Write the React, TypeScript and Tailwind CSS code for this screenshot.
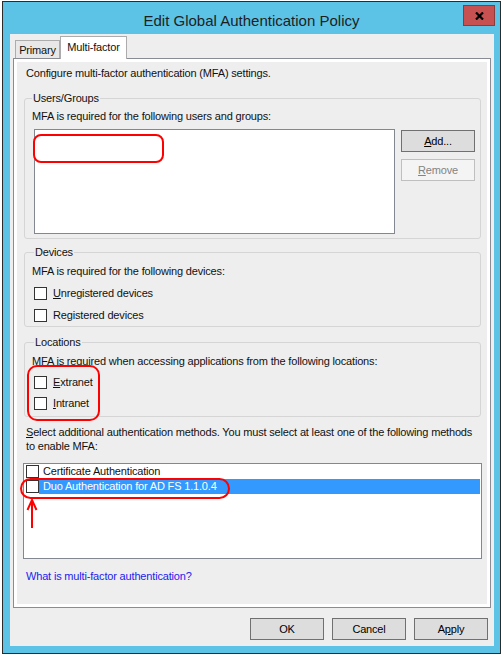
import React from "react"

const font = "font-['Segoe_UI','Liberation_Sans',Arial,sans-serif]"

const Box = () => <span className="block w-[13px] h-[13px] shrink-0 border border-[#333] bg-white" />

const Check = ({ pre, u, post }: { pre?: string; u: string; post: string }) => (
  <div className="flex items-center gap-[6px] h-[22px]">
    <Box />
    <span>
      {pre}
      <span className="underline">{u}</span>
      {post}
    </span>
  </div>
)

const Group = ({ title, className, children }: { title: string; className?: string; children: React.ReactNode }) => (
  <fieldset className={"ml-[7px] w-[457px] border border-[#d5d5d5] rounded-[3px] pl-[7px] " + (className || "")}>
    <legend className="px-[1px] leading-[15px]">{title}</legend>
    {children}
  </fieldset>
)

const Btn = ({ children, disabled }: { children: React.ReactNode; disabled?: boolean }) => (
  <button
    className={
      "w-[74px] h-[22px] flex items-center justify-center border " +
      (disabled ? "border-[#bfbfbf] bg-[#f4f4f4] text-[#838383]" : "border-[#707070] bg-[#dddddd] text-black")
    }
  >
    {children}
  </button>
)

export default function App() {
  return (
    <div className={"relative w-[502px] h-[657px] bg-white text-[11px] tracking-[-0.17px] leading-[15px] text-[#111] " + font}>
      <div className="ml-[2px] mt-[1px] w-[499px] h-[653px] border border-[#2b2b2b] bg-[#5cc3e6] flex flex-col">
        {/* title bar */}
        <div className="relative h-[32px] shrink-0 flex items-center justify-center pt-[4px] text-[15px] tracking-normal text-[#1e1e1e]">
          Edit Global Authentication Policy
          <div className="absolute right-[5px] top-[3px] w-[32px] h-[21px] bg-[#c75050] border border-[#8a3c3c] flex items-center justify-center">
            <svg width="9" height="8" viewBox="0 0 9 8">
              <path d="M1 0.5 L8 7.5 M8 0.5 L1 7.5" stroke="#000" strokeWidth="2.2" />
            </svg>
          </div>
        </div>

        {/* client area */}
        <div className="ml-[7px] w-[484px] h-[612px] bg-[#eeeeee] flex flex-col">
          {/* tabs */}
          <div className="h-[24px] flex items-end pl-[5px]">
            <div className="h-[18px] w-[45px] border border-b-0 border-[#acacac] bg-[#e8e8e8] flex items-center justify-center pt-[1px]">
              Primary
            </div>
            <div className="relative z-10 h-[23px] -mb-px w-[67px] border border-b-0 border-[#acacac] bg-white flex items-start justify-center pt-[3px]">
              Multi-factor
            </div>
          </div>

          {/* tab page */}
          <div className="ml-[3px] w-[478px] h-[550px] border border-[#898c95] bg-white p-[3px]">
            <div className="h-full bg-[#eeeeee] flex flex-col">
              <div className="pt-[4px] pl-[9px]">Configure multi-factor authentication (MFA) settings.</div>

              <Group title="Users/Groups" className="mt-[10px] pb-[4px]">
                <div className="mt-[3px]">MFA is required for the following users and groups:</div>
                <div className="mt-[5px] flex gap-[6px]">
                  <div className="ml-[2px] w-[361px] h-[105px] border border-[#828790] bg-white" />
                  <div className="pt-[1px] flex flex-col gap-[7px]">
                    <Btn>
                      <span className="underline">A</span>dd...
                    </Btn>
                    <Btn disabled>
                      <span className="underline">R</span>emove
                    </Btn>
                  </div>
                </div>
              </Group>

              <Group title="Devices" className="mt-[6px] pl-[9px]">
                <div className="mt-[4px] -ml-[2px]">MFA is required for the following devices:</div>
                <div className="mt-[3px]">
                  <Check u="U" post="nregistered devices" />
                  <Check pre="Re" u="g" post="istered devices" />
                </div>
              </Group>

              <Group title="Locations" className="mt-[8px] pl-[9px] pb-[2px]">
                <div className="mt-[4px] -ml-[2px]">
                  MFA is required when accessing applications from the following locations:
                </div>
                <div className="mt-[3px] [&>div]:h-[21px]">
                  <Check u="E" post="xtranet" />
                  <Check u="I" post="ntranet" />
                </div>
              </Group>

              <div className="mt-[8px] pl-[9px] leading-[14px]">
                <span className="underline">S</span>elect additional authentication methods. You must select at least one of the
                following methods
                <br />
                to enable MFA:
              </div>

              <div className="mt-[10px] ml-[6px] w-[459px] h-[96px] border border-[#828790] bg-white">
                <div className="h-[15px] flex items-center pl-[2px]">
                  <Box />
                  <span className="pl-[4px]">Certificate Authentication</span>
                </div>
                <div className="h-[15px] flex items-center pl-[2px] pr-[1px]">
                  <Box />
                  <span className="flex-1 h-full bg-[#3399ff] text-white pl-[4px] flex items-center">
                    Duo Authentication for AD FS 1.1.0.4
                  </span>
                </div>
              </div>

              <div className="mt-[10px] pl-[9px] text-[#2222ee]">What is multi-factor authentication?</div>
            </div>
          </div>

          {/* buttons */}
          <div className="mt-[10px] flex justify-end gap-[8px] pr-[6px]">
            <Btn>OK</Btn>
            <Btn>Cancel</Btn>
            <Btn>
              A<span className="underline">p</span>ply
            </Btn>
          </div>
        </div>
      </div>

      {/* red annotations */}
      <div className="absolute left-[33px] top-[133px] w-[131px] h-[29px] border-2 border-[#ff0000] rounded-[8px]" />
      <div className="absolute left-[27px] top-[364px] w-[73px] h-[56px] border-2 border-[#ff0000] rounded-[10px]" />
      <div className="absolute left-[20px] top-[477px] w-[210px] h-[21px] border-2 border-[#ff0000] rounded-full" />
      <svg className="absolute left-[25px] top-[497px]" width="14" height="32" viewBox="0 0 14 32">
        <path d="M7 2 L7 30 M2.5 12 L7 2 L11.5 12" fill="none" stroke="#ff0000" strokeWidth="2" />
      </svg>
    </div>
  )
}
